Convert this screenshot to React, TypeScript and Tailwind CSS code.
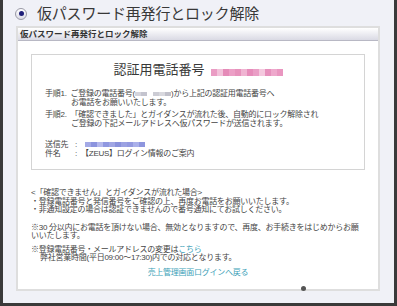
const font = "font-['Liberation_Sans','Noto_Sans_CJK_JP',sans-serif]"

const Radio = () => (
    <span className="flex h-[12px] w-[12px] items-center justify-center rounded-full border border-[#9a9aa6] bg-gradient-to-b from-white to-[#dcdce6]">
        <span className="h-[5px] w-[5px] rounded-full bg-[#1e1e78]" />
    </span>
)

const Mosaic = ({ colors, h }: { colors: string[]; h: string }) => (
    <span className={`inline-flex ${h} align-middle`}>
        {colors.map((c, i) => (
            <span key={i} className={`h-full w-[6px] ${c}`} />
        ))}
    </span>
)

const App = () => {
    return (
        <div
            className={`relative h-[306px] w-[397px] border-b-[3px] border-l-[3px] border-r-[3px] border-[#3a3a3a] bg-[#f0f1f7] text-[#444] ${font}`}
        >
            {/* page title */}
            <div className="flex h-[26px] items-center gap-[10px] pl-[12px] pt-[1px]">
                <Radio />
                <span className="text-[15px] leading-none tracking-[-0.2px] text-[#383838]">
                    仮パスワード再発行とロック解除
                </span>
            </div>

            <div className="relative ml-[13px] h-[265px] w-[364px] border-2 border-[#dedede] bg-white">
                <div className="flex h-[13px] items-center rounded-t-[2px] border-b border-[#b8b8c4] bg-gradient-to-b from-white to-[#dadae4] pl-[2px] text-[8.5px] font-bold leading-none text-[#333]">
                    仮パスワード再発行とロック解除
                </div>

                <div className="px-[13px]">
                    <div className="mt-[13px] h-[116px] border border-[#d4d4d4] pt-[5px]">
                        <div className="flex h-[18px] items-center justify-center gap-[6px]">
                            <span className="text-[13px] leading-none text-[#383838]">
                                認証用電話番号
                            </span>
                            <span className="mt-[6px]">
                                <Mosaic
                                    h="h-[7px]"
                                    colors={[
                                        'bg-[#ea9cc4]',
                                        'bg-[#f2c2da]',
                                        'bg-[#e58bb8]',
                                        'bg-[#ec9fc6]',
                                        'bg-[#e792bc]',
                                        'bg-[#f0b4d2]',
                                        'bg-[#e68cba]',
                                        'bg-[#ea9ec6]',
                                        'bg-[#f4c8de]',
                                        'bg-[#e690bc]',
                                        'bg-[#eea8cc]',
                                        'bg-[#e996c0]',
                                    ]}
                                />
                            </span>
                        </div>

                        <div className="mt-[11px] pl-[13px] text-[8px] leading-[9px] tracking-[-0.25px] whitespace-nowrap">
                            <div className="flex items-center">
                                <span>手順1.&nbsp;&nbsp;ご登録の電話番号(</span>
                                <Mosaic
                                    h="h-[4px]"
                                    colors={[
                                        'bg-[#d4d4dc]',
                                        'bg-[#c4c4ce]',
                                        'bg-white',
                                        'bg-[#ccccd4]',
                                        'bg-[#d8d8de]',
                                        'bg-[#c0c0ca]',
                                    ]}
                                />
                                <span>)から上記の認証用電話番号へ</span>
                            </div>
                            <div className="pl-[26px]">お電話をお願いいたします。</div>

                            <div className="mt-[3px]">
                                手順2.&nbsp;&nbsp;「確認できました」とガイダンスが流れた後、自動的にロック解除され
                            </div>
                            <div className="pl-[26px]">
                                ご登録の下記メールアドレスへ仮パスワードが送信されます。
                            </div>

                            <div className="mt-[12px] flex items-center">
                                <span className="w-[30px]">送信先</span>
                                <span className="w-[10px]">:</span>
                                <Mosaic
                                    h="h-[5px]"
                                    colors={[
                                        'bg-[#a4aae6]',
                                        'bg-[#8c94de]',
                                        'bg-[#b4b8ec]',
                                        'bg-[#9098e0]',
                                        'bg-[#a0a6e4]',
                                        'bg-[#8a92dc]',
                                        'bg-[#9ca2e2]',
                                        'bg-[#949ae0]',
                                        'bg-[#aab0ea]',
                                        'bg-[#8e96de]',
                                    ]}
                                />
                            </div>
                            <div className="flex">
                                <span className="w-[30px]">件名</span>
                                <span className="w-[6px]">:</span>
                                <span>【ZEUS】ログイン情報のご案内</span>
                            </div>
                        </div>
                    </div>

                    <div className="mt-[19px] text-[8px] leading-[8.5px] tracking-[-0.25px] whitespace-nowrap">
                        <div>&lt;「確認できません」とガイダンスが流れた場合&gt;</div>
                        <div>・登録電話番号と発信番号をご確認の上、再度お電話をお願いいたします。</div>
                        <div>・非通知設定の場合は認証できませんので番号通知にてお試しください。</div>

                        <div className="mt-[9px]">
                            ※30 分以内にお電話を頂けない場合、無効となりますので、再度、お手続きをはじめからお願
                        </div>
                        <div>いいたします。</div>

                        <div className="mt-[5px]">
                            ※登録電話番号・メールアドレスの変更は
                            <span className="text-[#3d9fb8]">こちら</span>
                        </div>
                        <div className="pl-[9px]">
                            弊社営業時間(平日09:00～17:30)内での対応となります。
                        </div>

                        <div className="mt-[6px] text-center text-[#3d9fb8]">
                            売上管理画面ログインへ戻る
                        </div>
                    </div>
                </div>

                <span className="absolute left-[283px] top-[258px] h-[5px] w-[5px] rounded-full bg-[#555]" />
            </div>
        </div>
    )
}

export default App
